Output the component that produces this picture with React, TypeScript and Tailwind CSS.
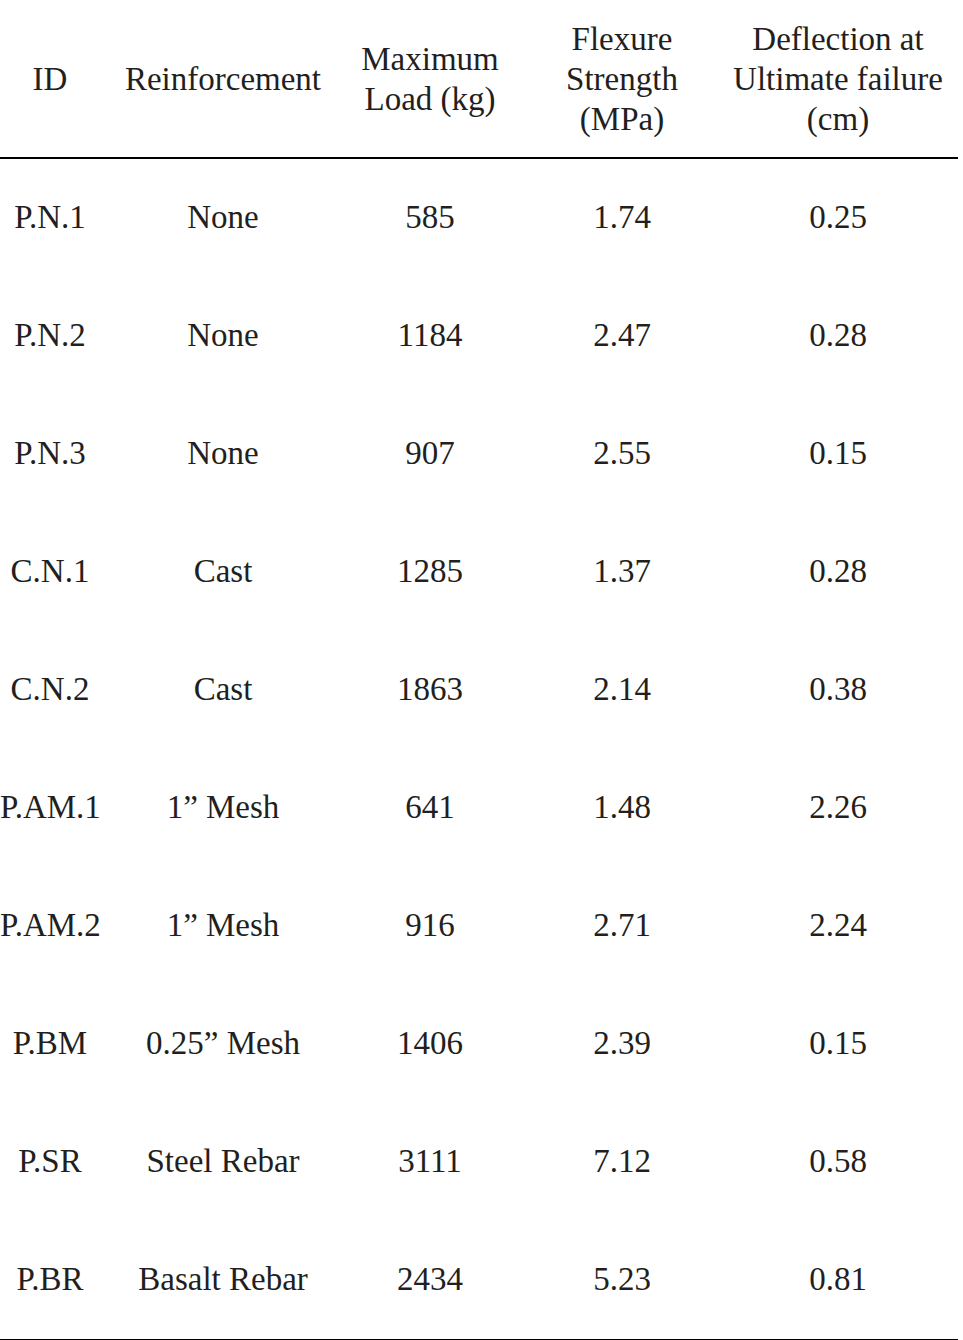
export default function App() {
  const rows = [
    { id: "P.N.1", reinforcement: "None", load: "585", flexure: "1.74", deflection: "0.25" },
    { id: "P.N.2", reinforcement: "None", load: "1184", flexure: "2.47", deflection: "0.28" },
    { id: "P.N.3", reinforcement: "None", load: "907", flexure: "2.55", deflection: "0.15" },
    { id: "C.N.1", reinforcement: "Cast", load: "1285", flexure: "1.37", deflection: "0.28" },
    { id: "C.N.2", reinforcement: "Cast", load: "1863", flexure: "2.14", deflection: "0.38" },
    { id: "P.AM.1", reinforcement: "1” Mesh", load: "641", flexure: "1.48", deflection: "2.26" },
    { id: "P.AM.2", reinforcement: "1” Mesh", load: "916", flexure: "2.71", deflection: "2.24" },
    { id: "P.BM", reinforcement: "0.25” Mesh", load: "1406", flexure: "2.39", deflection: "0.15" },
    { id: "P.SR", reinforcement: "Steel Rebar", load: "3111", flexure: "7.12", deflection: "0.58" },
    { id: "P.BR", reinforcement: "Basalt Rebar", load: "2434", flexure: "5.23", deflection: "0.81" },
  ];

  const cols = "grid grid-cols-[100px_246px_168px_216px_216px]";

  return (
    <div className="min-h-screen bg-white font-['Liberation_Serif',serif] text-[33px] leading-[40px] text-[#231f20]">
      <div className="w-[958px]">
        {/* header */}
        <div className={`${cols} h-[157px] items-center text-center border-b-2 border-black box-content`}>
          <div>ID</div>
          <div>Reinforcement</div>
          <div>
            Maximum
            <br />
            Load (kg)
          </div>
          <div>
            Flexure
            <br />
            Strength
            <br />
            (MPa)
          </div>
          <div>
            Deflection at
            <br />
            Ultimate failure
            <br />
            (cm)
          </div>
        </div>

        {/* body */}
        <div className="border-b border-black">
          {rows.map((r) => (
            <div key={r.id} className={`${cols} h-[118px] items-center text-center pb-0.5`}>
              <div className="whitespace-nowrap">{r.id}</div>
              <div>{r.reinforcement}</div>
              <div>{r.load}</div>
              <div>{r.flexure}</div>
              <div>{r.deflection}</div>
            </div>
          ))}
        </div>
      </div>
    </div>
  );
}
